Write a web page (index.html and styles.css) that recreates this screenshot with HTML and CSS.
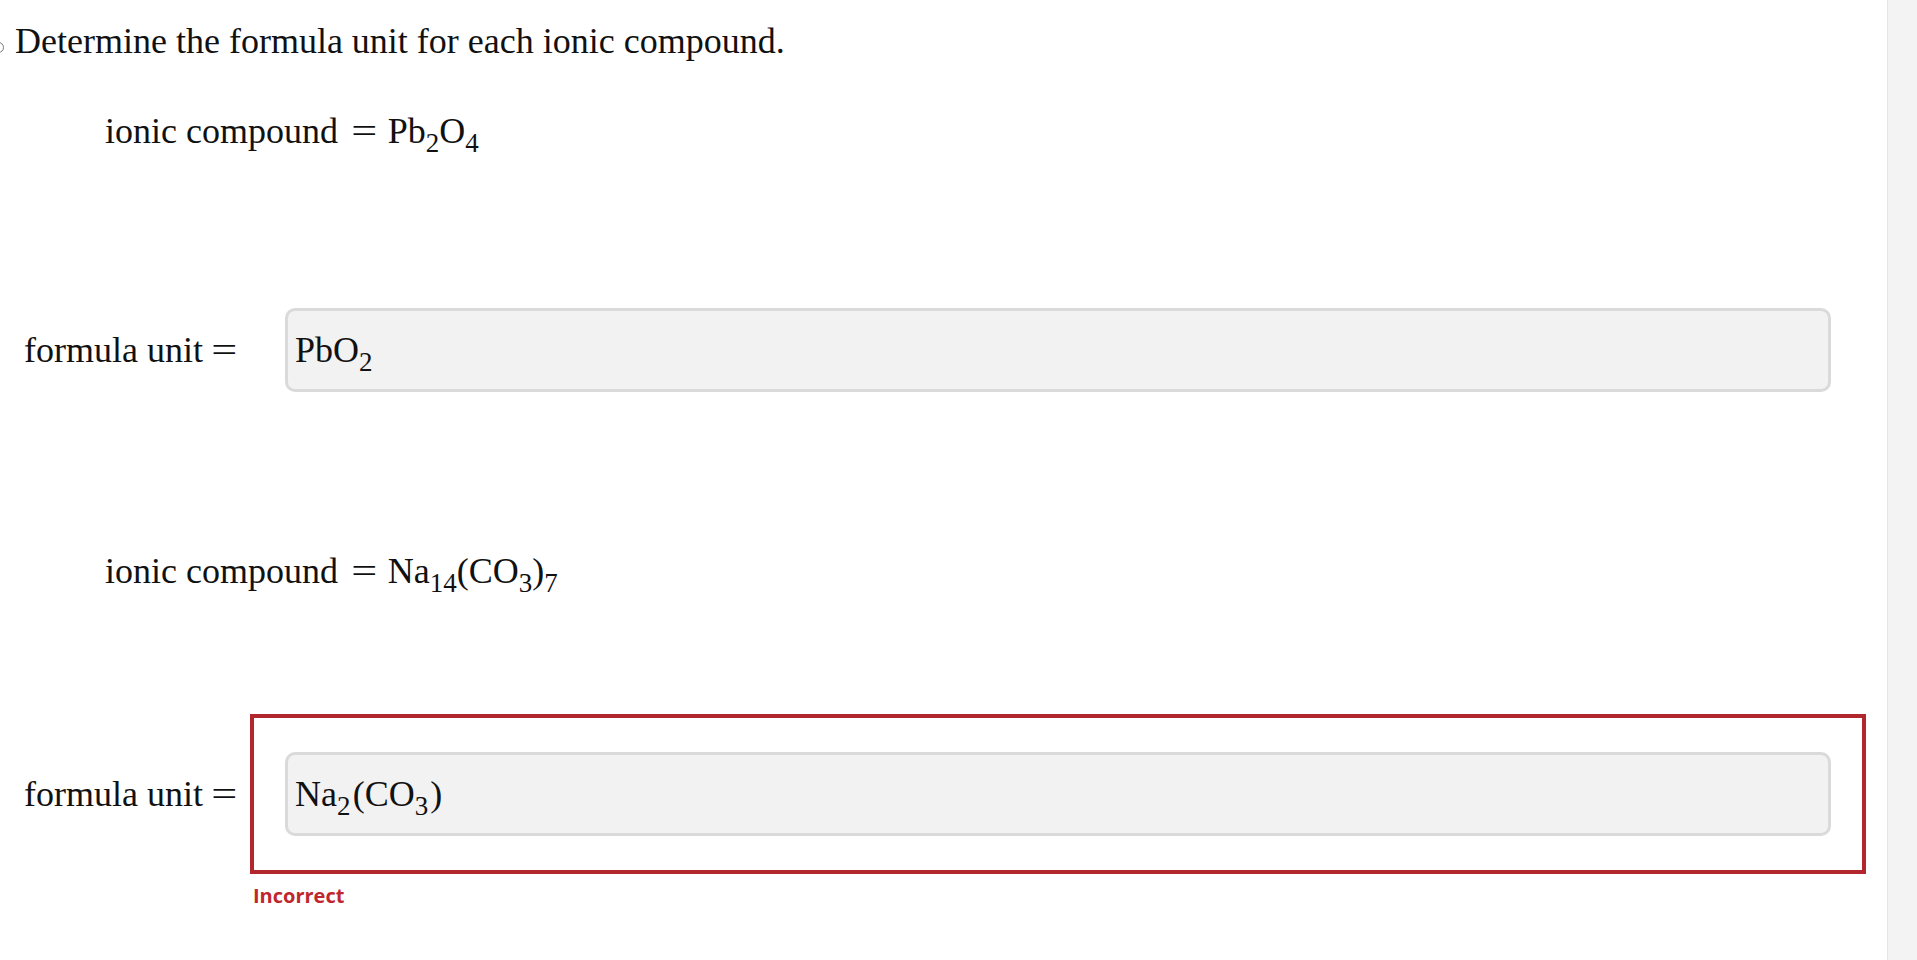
FILE: index.html
```html
<!DOCTYPE html>
<html lang="en">
<head>
    <meta charset="UTF-8">
    <meta name="viewport" content="width=device-width, initial-scale=1.0">
    <title>Formula unit</title>
    <link rel="stylesheet" href="styles.css">
</head>
<body>
    <div class="page">
        <main class="question">
            <div class="prompt">
                <span class="bullet"></span>
                <p>Determine the formula unit for each ionic compound.</p>
            </div>

            <p class="compound">ionic compound <span class="eq">=</span> Pb<sub>2</sub>O<sub>4</sub></p>

            <div class="answer-row">
                <span class="label">formula unit <span class="eq">=</span></span>
                <div class="answer-box">
                    <div class="answer-input">PbO<sub>2</sub></div>
                </div>
            </div>

            <p class="compound">ionic compound <span class="eq">=</span> Na<sub>14</sub>(CO<sub>3</sub>)<sub>7</sub></p>

            <div class="answer-row">
                <span class="label">formula unit <span class="eq">=</span></span>
                <div class="answer-box incorrect">
                    <div class="answer-input">Na<sub>2</sub>(CO<sub>3</sub>)</div>
                </div>
                <div class="feedback">Incorrect</div>
            </div>
        </main>
        <aside class="scroll-strip"></aside>
    </div>
</body>
</html>
```

FILE: styles.css
```css
body {
    margin: 0;
    background-color: #fff;
    font-family: 'Liberation Serif', 'Times New Roman', serif;
    color: #111;
}

.page {
    display: flex;
    min-height: 100vh;
}

.question {
    flex: 1;
    padding: 19px 21px 0 0;
    font-size: 36px;
    line-height: 44px;
}

p {
    margin: 0;
}

sub {
    font-size: 0.75em;
    line-height: 0;
    vertical-align: -0.34em;
}

/* the "=" in the math text is wider than the plain serif glyph */
.eq {
    display: inline-block;
    transform: scaleX(1.28);
    margin: 0 0.06em;
}

.compound .eq {
    margin-left: 0.2em;
    margin-right: 0.12em;
}

.prompt {
    display: flex;
    align-items: center;
}

.bullet {
    width: 9px;
    height: 9px;
    border: 1.5px solid #777;
    border-radius: 50%;
    margin-left: -7px;
    margin-right: 11px;
    margin-top: 12px;
}

.compound {
    padding-left: 105px;
    margin-top: 46px;
}

.answer-row + .compound {
    margin-top: 119px;
}

.answer-row {
    display: grid;
    grid-template-columns: 226px 1fr;
    align-items: center;
    padding-left: 24px;
    margin-top: 117px;
}

.compound + .answer-row + .compound + .answer-row {
    margin-top: 121px;
}

.label {
    white-space: nowrap;
}

.answer-box {
    border: 4px solid transparent;
    padding: 34px 31px;
}

.answer-box.incorrect {
    border-color: #b2272e;
}

.answer-input {
    box-sizing: border-box;
    height: 84px;
    padding: 0 7px;
    line-height: 78px;
    background-color: #f2f2f2;
    border: 3px solid #dadada;
    border-radius: 10px;
}

.answer-input sub {
    margin-right: 0.08em;
}

.feedback {
    grid-column: 2;
    margin-top: 10px;
    padding-left: 3px;
    font-family: 'Open Sans', sans-serif;
    font-weight: 700;
    font-size: 20px;
    line-height: 24px;
    color: #c0272d;
}

.scroll-strip {
    width: 29px;
    background-color: #f3f3f3;
    border-left: 1px solid #e6e6e6;
}
```
